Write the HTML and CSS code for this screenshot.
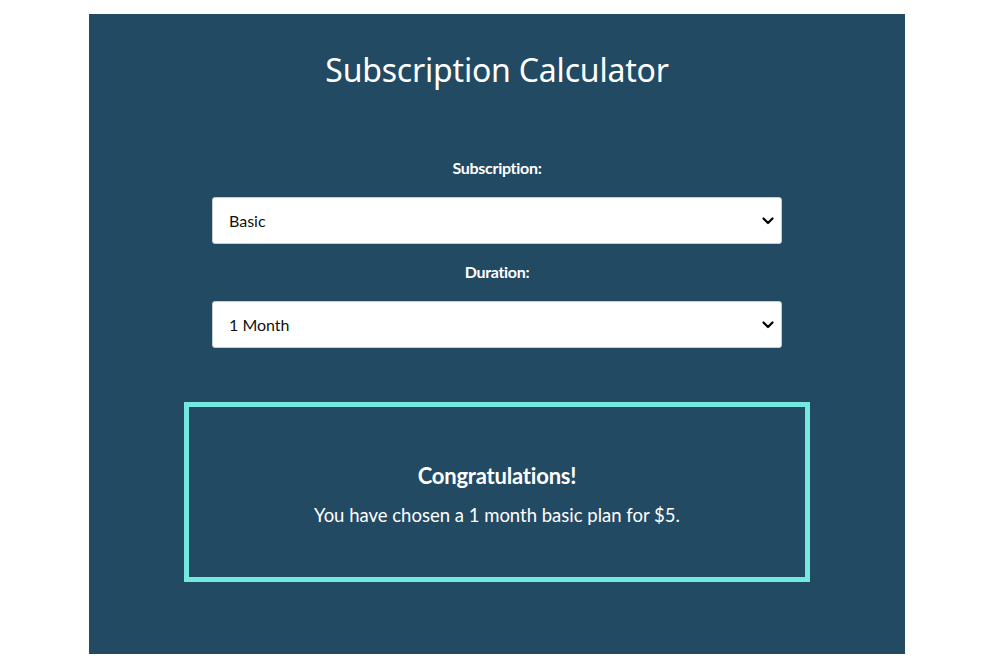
FILE: index.html
```html
<!DOCTYPE html>
<html>
<head>
<meta charset="utf-8">
<link rel="stylesheet" href="styles.css">
</head>
<body>
<main class="panel">
  <h1 class="title">Subscription Calculator</h1>
  <form class="form">
    <label class="label" for="sub">Subscription:</label>
    <div class="select-wrap">
      <select id="sub" class="select">
        <option>Basic</option>
        <option>Premium</option>
      </select>
      <svg class="chev" viewBox="0 0 12 8" width="12" height="8"><path d="M1.5 1.5 L6 6 L10.5 1.5" fill="none" stroke="#000" stroke-width="2.2" stroke-linecap="round" stroke-linejoin="round"/></svg>
    </div>
    <label class="label" for="dur">Duration:</label>
    <div class="select-wrap">
      <select id="dur" class="select">
        <option>1 Month</option>
        <option>3 Months</option>
      </select>
      <svg class="chev" viewBox="0 0 12 8" width="12" height="8"><path d="M1.5 1.5 L6 6 L10.5 1.5" fill="none" stroke="#000" stroke-width="2.2" stroke-linecap="round" stroke-linejoin="round"/></svg>
    </div>
  </form>
  <section class="result">
    <h2 class="result-title">Congratulations!</h2>
    <p class="result-text">You have chosen a 1 month basic plan for $5.</p>
  </section>
</main>
</body>
</html>
```

FILE: styles.css
```css
html, body {
  margin: 0;
  padding: 0;
  background: #ffffff;
}
body {
  padding-top: 14px;
  font-family: Lato, "Open Sans", sans-serif;
}
.panel {
  width: 816px;
  height: 640px;
  margin: 0 0 0 89px;
  background: #234a63;
  color: #ffffff;
  display: flex;
  flex-direction: column;
  align-items: center;
  box-sizing: border-box;
  padding-top: 36px;
}
.title {
  margin: 0;
  font-family: "Noto Sans", Lato, sans-serif;
  font-weight: 400;
  font-size: 32px;
  line-height: 40px;
  letter-spacing: -0.2px;
}
.form {
  display: flex;
  flex-direction: column;
  align-items: center;
  margin-top: 68px;
}
.label {
  font-size: 16px;
  font-weight: 700;
  line-height: 20px;
  letter-spacing: -0.3px;
  margin-bottom: 19px;
}
.select-wrap {
  position: relative;
  width: 570px;
  height: 47px;
  margin-bottom: 18px;
}
.select {
  appearance: none;
  -webkit-appearance: none;
  width: 100%;
  height: 100%;
  box-sizing: border-box;
  border: 1px solid #c7cdd1;
  border-radius: 3px;
  background: #ffffff;
  font-family: Lato, "Open Sans", sans-serif;
  font-size: 16px;
  color: #111;
  padding: 0 16px;
}
.chev {
  position: absolute;
  right: 8px;
  top: 20px;
  pointer-events: none;
}
.result {
  margin-top: 36px;
  width: 626px;
  height: 180px;
  box-sizing: border-box;
  border: 5px solid #75e8df;
  display: flex;
  flex-direction: column;
  align-items: center;
  padding-top: 56px;
}
.result-title {
  margin: 0;
  font-size: 22px;
  font-weight: 700;
  line-height: 26px;
  letter-spacing: -0.2px;
}
.result-text {
  margin: 14px 0 0;
  font-size: 18.5px;
  line-height: 24px;
}
```
